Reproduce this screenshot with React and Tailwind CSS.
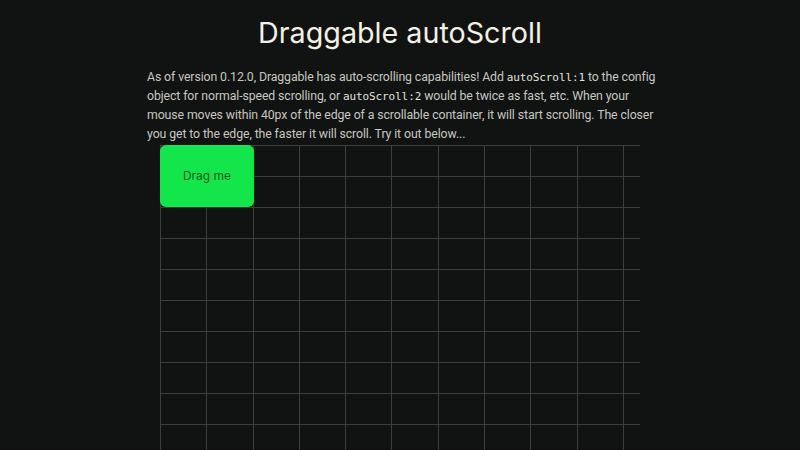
import React from 'react';

const COLS = 11;
const ROWS = 10;

const Code = ({ children }) => (
  <code className="font-['DejaVu_Sans_Mono',monospace] text-[11px] leading-none text-[#e4e4dc]">{children}</code>
);

const App = () => {
  const cells = Array.from({ length: COLS * ROWS });

  return (
    <div className="h-[450px] w-full overflow-hidden bg-[#111212] font-['Inter',sans-serif]">
      <h1 className="pt-[14px] text-center text-[28.7px] leading-[38px] text-[#f4f1e3]">
        Draggable autoScroll
      </h1>
      <p className="mx-auto mt-[16px] w-[506px] whitespace-nowrap font-['Roboto',sans-serif] text-[12.3px] leading-[19px] tracking-[-0.1px] text-[#c7c7c0]">
        As of version 0.12.0, Draggable has auto-scrolling capabilities! Add <Code>autoScroll:1</Code> to the config
        <br />
        object for normal-speed scrolling, or <Code>autoScroll:2</Code> would be twice as fast, etc. When your
        <br />
        mouse moves within 40px of the edge of a scrollable container, it will start scrolling. The closer
        <br />
        you get to the edge, the faster it will scroll. Try it out below...
      </p>
      <div className="relative mx-auto mt-[1px] h-[320px] w-[480px] overflow-hidden">
        <div className="grid grid-cols-[repeat(11,46.3px)] auto-rows-[31px]">
          {cells.map((_, i) => (
            <div key={i} className="border-l border-t border-[#3d3e3e]" />
          ))}
        </div>
        <div className="absolute left-0 top-0 flex h-[62px] w-[94px] items-center justify-center rounded-[6px] bg-[#12e64b] text-[12px] text-[#13561f]">
          Drag me
        </div>
      </div>
    </div>
  );
};

export default App;
